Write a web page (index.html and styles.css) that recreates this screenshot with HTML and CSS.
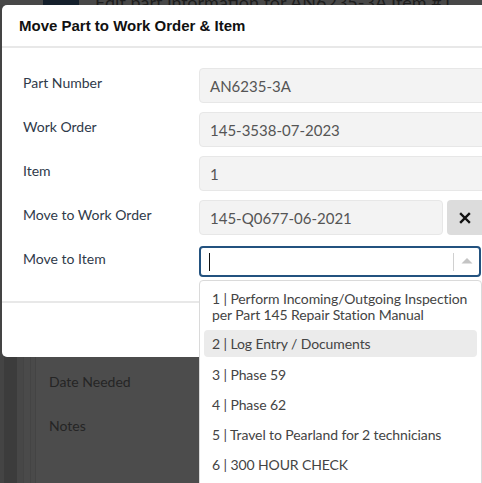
FILE: index.html
```html
<!DOCTYPE html>
<html>
<head>
<meta charset="utf-8">
<link rel="stylesheet" href="styles.css">
</head>
<body>
<div class="page">
  <div class="topbar">
    <div class="brand"></div>
    <div class="page-title">Edit part information for AN6235-3A Item #1</div>
  </div>
  <div class="page-main">
    <div class="rail"></div>
    <div class="page-form">
      <div class="page-label">Date Needed</div>
      <div class="page-label">Notes</div>
    </div>
  </div>
</div>

<div class="modal">
  <div class="modal-header">Move Part to Work Order &amp; Item</div>
  <div class="modal-body">
    <div class="row">
      <div class="label">Part Number</div>
      <div class="field">AN6235-3A</div>
    </div>
    <div class="row">
      <div class="label">Work Order</div>
      <div class="field">145-3538-07-2023</div>
    </div>
    <div class="row">
      <div class="label">Item</div>
      <div class="field">1</div>
    </div>
    <div class="row">
      <div class="label">Move to Work Order</div>
      <div class="field-group">
        <div class="field">145-Q0677-06-2021</div>
        <div class="clear-btn">
          <svg width="12" height="12" viewBox="0 0 12 12"><path d="M2 2 L10 10 M10 2 L2 10" stroke="#111" stroke-width="2.4" stroke-linecap="square"/></svg>
        </div>
      </div>
    </div>
    <div class="row">
      <div class="label">Move to Item</div>
      <div class="select">
        <span class="caret"></span>
        <span class="select-sep"></span>
        <span class="arrow-wrap"><svg width="12" height="7" viewBox="0 0 12 7"><path d="M0.5 6.5 L6 1 L11.5 6.5 Z" fill="#c4c4c4"/></svg></span>
      </div>
    </div>
  </div>
  <div class="modal-footer"></div>
</div>

<div class="dropdown">
  <div class="opt">1 | Perform Incoming/Outgoing Inspection per Part 145 Repair Station Manual</div>
  <div class="opt active">2 | Log Entry / Documents</div>
  <div class="opt">3 | Phase 59</div>
  <div class="opt">4 | Phase 62</div>
  <div class="opt">5 | Travel to Pearland for 2 technicians</div>
  <div class="opt">6 | 300 HOUR CHECK</div>
</div>
</body>
</html>
```

FILE: styles.css
```css
html, body {
  margin: 0;
  padding: 0;
}
body {
  width: 482px;
  height: 483px;
  overflow: hidden;
  position: relative;
  background: #4c4c4c;
  font-family: Lato, "Open Sans", sans-serif;
}
.page {
  height: 483px;
  display: flex;
  flex-direction: column;
}
.topbar {
  height: 5px;
  display: flex;
  overflow: hidden;
  background: #484848;
}
.brand {
  margin-left: 43px;
  width: 36px;
  background: #15202c;
}
.page-title {
  margin-left: 16px;
  font-size: 18px;
  line-height: 4px;
  color: #1e1e1e;
  white-space: nowrap;
}
.page-main {
  flex: 1;
  display: flex;
}
.rail {
  width: 17px;
  background: #3c3c3c;
  border-left: 4px solid #444;
  box-sizing: border-box;
}
.page-form {
  flex: 1;
  padding-left: 19px;
  padding-top: 368px;
  border-left: 6px solid #474747;
  box-shadow: inset 1px 0 0 #444, inset 7px 0 0 #4a4a4a, inset 8px 0 0 #444, inset 12px 0 0 #4a4a4a, inset 13px 0 0 #444;
}
.page-label {
  font-size: 14px;
  color: #252525;
  height: 44px;
  padding-left: 7px;
}

.modal {
  position: absolute;
  left: 2px;
  top: 5px;
  width: 520px;
  background: #fff;
  border-radius: 5px;
  color: #2e3642;
}
.modal-header {
  height: 41px;
  padding-left: 17px;
  display: flex;
  align-items: center;
  font-family: "Liberation Sans", Arial, sans-serif;
  font-weight: bold;
  font-size: 15px;
  color: #111;
  border-bottom: 2px solid #e8e8e8;
}
.modal-body {
  padding: 20px 0 24px 21px;
  display: flex;
  flex-direction: column;
  gap: 9px;
  border-bottom: 2px solid #e8e8e8;
}
.row {
  display: flex;
  align-items: flex-start;
}
.label {
  width: 176px;
  flex: none;
  font-size: 14px;
  padding-top: 6px;
  color: #2f3a4a;
}
.field {
  flex: 1;
  height: 35px;
  box-sizing: border-box;
  background: #f3f3f3;
  border: 1px solid #e7e7e7;
  border-radius: 4px;
  padding-left: 10px;
  display: flex;
  align-items: center;
  font-size: 15px;
  color: #555;
}
.field-group {
  flex: 1;
  display: flex;
  gap: 4px;
}
.field-group .field {
  flex: none;
  width: 244px;
}
.clear-btn {
  width: 40px;
  height: 35px;
  background: #dcdcdc;
  border-radius: 4px;
  display: flex;
  align-items: center;
  padding-left: 12px;
  box-sizing: border-box;
}
.select {
  width: 282px;
  height: 31px;
  box-sizing: border-box;
  border: 2px solid #23527f;
  border-radius: 4px;
  display: flex;
  align-items: center;
  margin-top: 2px;
}
.caret {
  width: 1px;
  height: 18px;
  background: #111;
  margin-left: 8px;
}
.select-sep {
  margin-left: auto;
  width: 1px;
  height: 18px;
  background: #d0d0d0;
}
.arrow-wrap {
  width: 25px;
  display: flex;
  justify-content: center;
  padding-bottom: 2px;
}
.modal-footer {
  height: 54px;
}

.dropdown {
  position: absolute;
  left: 199px;
  top: 280px;
  width: 283px;
  height: 230px;
  box-sizing: border-box;
  background: #fff;
  border: 1px solid #dadada;
  border-radius: 4px;
  padding: 4px 4px;
  display: flex;
  flex-direction: column;
  gap: 3.3px;
}
.opt {
  padding: 5px 2px 5px 8px;
  font-size: 14px;
  line-height: 17px;
  letter-spacing: -0.1px;
  color: #444;
  border-radius: 4px;
}
.opt:first-child {
  line-height: 16px;
  padding-top: 5.5px;
  padding-bottom: 4.5px;
}
.opt.active {
  background: #ebebeb;
}
```
